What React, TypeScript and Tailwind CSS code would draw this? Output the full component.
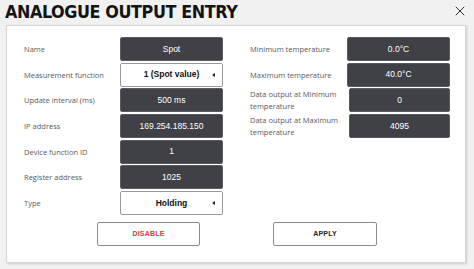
import { X } from 'lucide-react';

const label = "text-[7.5px] leading-[10px] text-[#5a5a5a] font-['Open_Sans',sans-serif]";
const darkField =
    "flex items-center justify-center h-[24px] bg-[#404047] border border-[#5a5a62] rounded-[2px] text-white text-[8.5px] font-['Liberation_Sans',Arial,sans-serif]";

function Dark({ value, className = '' }: { value: string; className?: string }) {
    return <div className={`${darkField} ${className}`}>{value}</div>;
}

function Select({ value }: { value: string }) {
    return (
        <div className="relative flex items-center justify-center h-[24px] bg-white border border-[#9a9a9a] rounded-[2px] text-[#111] text-[8.5px] font-bold font-['Liberation_Sans',Arial,sans-serif]">
            <span>{value}</span>
            <span className="absolute right-[7px] top-1/2 -translate-y-1/2 w-0 h-0 border-y-[2.5px] border-y-transparent border-r-[3px] border-r-[#222]" />
        </div>
    );
}

export default function App() {
    const left: { name: string; value: string; select?: boolean }[] = [
        { name: 'Name', value: 'Spot' },
        { name: 'Measurement function', value: '1 (Spot value)', select: true },
        { name: 'Update interval (ms)', value: '500 ms' },
        { name: 'IP address', value: '169.254.185.150' },
        { name: 'Device function ID', value: '1' },
        { name: 'Register address', value: '1025' },
        { name: 'Type', value: 'Holding', select: true },
    ];

    return (
        <div className="w-[474px] h-[269px] bg-[#f1f1f1] overflow-hidden flex flex-col">
            {/* Header */}
            <div className="h-[25px] flex items-start justify-between pl-[5px] pr-[6px]">
                <h1 className="mt-[2px] text-[17.8px] leading-[20px] font-bold tracking-[-0.4px] text-[#141414] font-['DejaVu_Sans_Condensed','DejaVu_Sans',sans-serif]">
                    ANALOGUE OUTPUT ENTRY
                </h1>
                <X className="w-[16px] h-[16px] mt-[3px] text-[#222]" strokeWidth={1.4} />
            </div>

            {/* Panel */}
            <div className="ml-[6px] w-[460px] h-[238px] bg-white border border-[#d4d4d4] shadow-[1px_1px_2px_rgba(0,0,0,0.15)] flex flex-col pt-[11px] pl-[17px]">
                <div className="flex">
                    {/* Left column */}
                    <div className="flex flex-col gap-[1.7px] w-[206px]">
                        {left.map((row) => (
                            <div key={row.name} className="flex items-center">
                                <div className={`${label} w-[96px]`}>{row.name}</div>
                                <div className="w-[103px]">
                                    {row.select ? <Select value={row.value} /> : <Dark value={row.value} />}
                                </div>
                            </div>
                        ))}
                    </div>

                    {/* Right column */}
                    <div className="flex flex-col gap-[1.7px] ml-[20px]">
                        <div className="flex items-center">
                            <div className={`${label} w-[97px]`}>Minimum temperature</div>
                            <Dark value="0.0°C" className="w-[103px]" />
                        </div>
                        <div className="flex items-center">
                            <div className={`${label} w-[97px]`}>Maximum temperature</div>
                            <Dark value="40.0°C" className="w-[103px]" />
                        </div>
                        <div className="flex items-center">
                            <div className={`${label} leading-[12px] w-[99px]`}>Data output at Minimum<br />temperature</div>
                            <Dark value="0" className="w-[101px]" />
                        </div>
                        <div className="flex items-center">
                            <div className={`${label} leading-[12px] w-[99px]`}>Data output at Maximum<br />temperature</div>
                            <Dark value="4095" className="w-[101px]" />
                        </div>
                    </div>
                </div>

                {/* Buttons */}
                <div className="flex mt-[7px] pl-[73px] gap-[73px]">
                    <button className="w-[103px] h-[24px] bg-white border border-[#8c8c8c] rounded-[2px] text-[7px] font-bold text-[#e0363d] tracking-[0.2px] font-['Liberation_Sans',Arial,sans-serif]">
                        DISABLE
                    </button>
                    <button className="w-[104px] h-[24px] bg-white border border-[#8c8c8c] rounded-[2px] text-[7px] font-bold text-[#222] tracking-[0.2px] font-['Liberation_Sans',Arial,sans-serif]">
                        APPLY
                    </button>
                </div>
            </div>
        </div>
    );
}
